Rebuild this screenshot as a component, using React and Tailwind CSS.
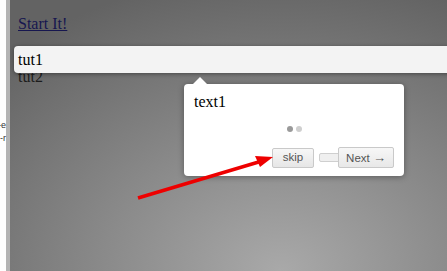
export default function App() {
  return (
    <div className="flex h-[271px] w-[447px] overflow-hidden bg-white font-['Liberation_Serif',serif] text-[16px] text-black">
      <div className="relative w-[6px] shrink-0 bg-white text-[9px] leading-none">
        <span className="absolute right-0 top-[121px] whitespace-nowrap font-['Liberation_Sans',sans-serif] text-[#333]">-e</span>
        <span className="absolute right-0 top-[134px] whitespace-nowrap font-['Liberation_Sans',sans-serif] text-[#333]">-r</span>
      </div>
      <div className="w-[4px] shrink-0 bg-[#b4b4b4]" />
      <main className="relative flex-1">
        <div className="absolute inset-0 bg-[radial-gradient(ellipse_90%_110%_at_62%_100%,#a9a9a9_0%,#8a8a8a_45%,#636363_100%)]" />

        <div className="relative px-2 pt-[12px]">
          <a href="#" className="text-[#16164f] underline">Start It!</a>
          <div className="mt-[17px] leading-[16px] text-[#1c1c1c]">
            <div>tut1</div>
            <div>tut2</div>
          </div>
        </div>

        <div className="absolute left-[4px] right-[-10px] top-[46px] flex h-[27px] items-center rounded-[4px] bg-[#f3f3f3] pl-[4px] shadow-[0_1px_4px_rgba(0,0,0,0.4)]">
          tut1
        </div>

        <div className="absolute left-[174px] top-[84px] h-[92px] w-[220px] rounded-[4px] bg-white shadow-[0_1px_6px_rgba(0,0,0,0.35)]">
          <div className="absolute left-[9px] top-[-7px] h-0 w-0 border-x-[7px] border-b-[7px] border-x-transparent border-b-white" />
          <div className="px-[10px] pt-[9px] leading-[18px]">text1</div>
          <div className="mt-[15px] flex justify-center gap-[3px]">
            <span className="h-[6px] w-[6px] rounded-full bg-[#9a9a9a]" />
            <span className="h-[6px] w-[6px] rounded-full bg-[#cfcfcf]" />
          </div>
          <div className="absolute right-[10px] top-[63px] flex items-center font-['Liberation_Sans',sans-serif] text-[11.5px] text-[#555]">
            <button className="h-[20px] w-[42px] rounded-[2px] border border-[#c9c9c9] bg-[linear-gradient(#f7f7f7,#e6e6e6)]">skip</button>
            <button className="ml-[5px] h-[9px] w-[20px] rounded-l-[2px] border border-[#cfcfcf] bg-[#efefef]" />
            <button className="ml-[-1px] h-[21px] w-[56px] rounded-[2px] border border-[#c9c9c9] bg-[linear-gradient(#f7f7f7,#e8e8e8)]">Next <span className="text-[13px]">→</span></button>
          </div>
        </div>

        <svg className="absolute left-0 top-0" width="437" height="271">
          <line x1="128" y1="198" x2="252" y2="161" stroke="#ee0000" strokeWidth="3.5" />
          <polygon points="263,157 245,156 250,167" fill="#ee0000" />
        </svg>
      </main>
    </div>
  );
}
